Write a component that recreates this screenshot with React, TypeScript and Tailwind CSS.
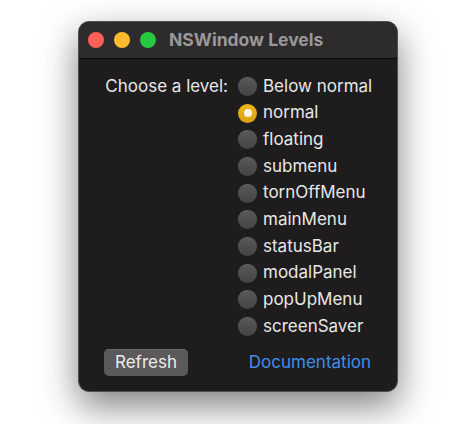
import React from "react";

const levels = [
  "Below normal",
  "normal",
  "floating",
  "submenu",
  "tornOffMenu",
  "mainMenu",
  "statusBar",
  "modalPanel",
  "popUpMenu",
  "screenSaver",
];

function Radio({ selected }: { selected: boolean }) {
  if (selected) {
    return (
      <span className="flex h-[19px] w-[19px] shrink-0 items-center justify-center rounded-full bg-gradient-to-b from-[#f0b81c] to-[#d9a00a]">
        <span className="h-[8px] w-[8px] rounded-full bg-[#f8f4ea]" />
      </span>
    );
  }
  return (
    <span className="h-[19px] w-[19px] shrink-0 rounded-full bg-gradient-to-b from-[#5a5859] to-[#454344] shadow-[inset_0_0.5px_0_rgba(255,255,255,0.15)]" />
  );
}

export default function App() {
  return (
    <div
      className="flex h-[424px] w-[474px] bg-white pl-[78px] pt-[21px]"
      style={{ fontFamily: "Inter, 'Noto Sans', sans-serif" }}
    >
      <div className="flex h-[371px] w-[320px] flex-col overflow-hidden rounded-[11px] border border-[#505050] bg-[#1e1c1d] shadow-[0_14px_36px_rgba(0,0,0,0.5)]">
        <div className="flex h-[37px] shrink-0 items-center border-b border-[#0b0b0b] bg-[#2d2b2c] pl-[9px]">
          <span className="h-[16px] w-[16px] rounded-full bg-[#fe5f57]" />
          <span className="ml-[10px] h-[16px] w-[16px] rounded-full bg-[#febc2e]" />
          <span className="ml-[10px] h-[16px] w-[16px] rounded-full bg-[#28c840]" />
          <span className="ml-[13px] text-[17.5px] font-bold text-[#9a9899]">NSWindow Levels</span>
        </div>
        <div className="flex pt-[14px]">
          <div className="flex h-[26.7px] w-[149px] items-center justify-end text-[17px] text-[#e9e7e8]">
            Choose a level:
          </div>
          <div className="ml-[10px] flex flex-col">
            {levels.map((l, i) => (
              <div key={l} className="flex h-[26.7px] items-center gap-[6px]">
                <Radio selected={i === 1} />
                <span className="text-[17px] text-[#e9e7e8]">{l}</span>
              </div>
            ))}
          </div>
        </div>
        <div className="mt-[9px] flex items-center justify-between pl-[25px] pr-[26px]">
          <button className="flex h-[27px] w-[84px] items-center justify-center rounded-[5px] bg-[#5b595a] text-[17px] text-[#eeecec] shadow-[inset_0_0.5px_0_rgba(255,255,255,0.2)]">
            Refresh
          </button>
          <span className="text-[17px] text-[#3d8fe8]">Documentation</span>
        </div>
      </div>
    </div>
  );
}
